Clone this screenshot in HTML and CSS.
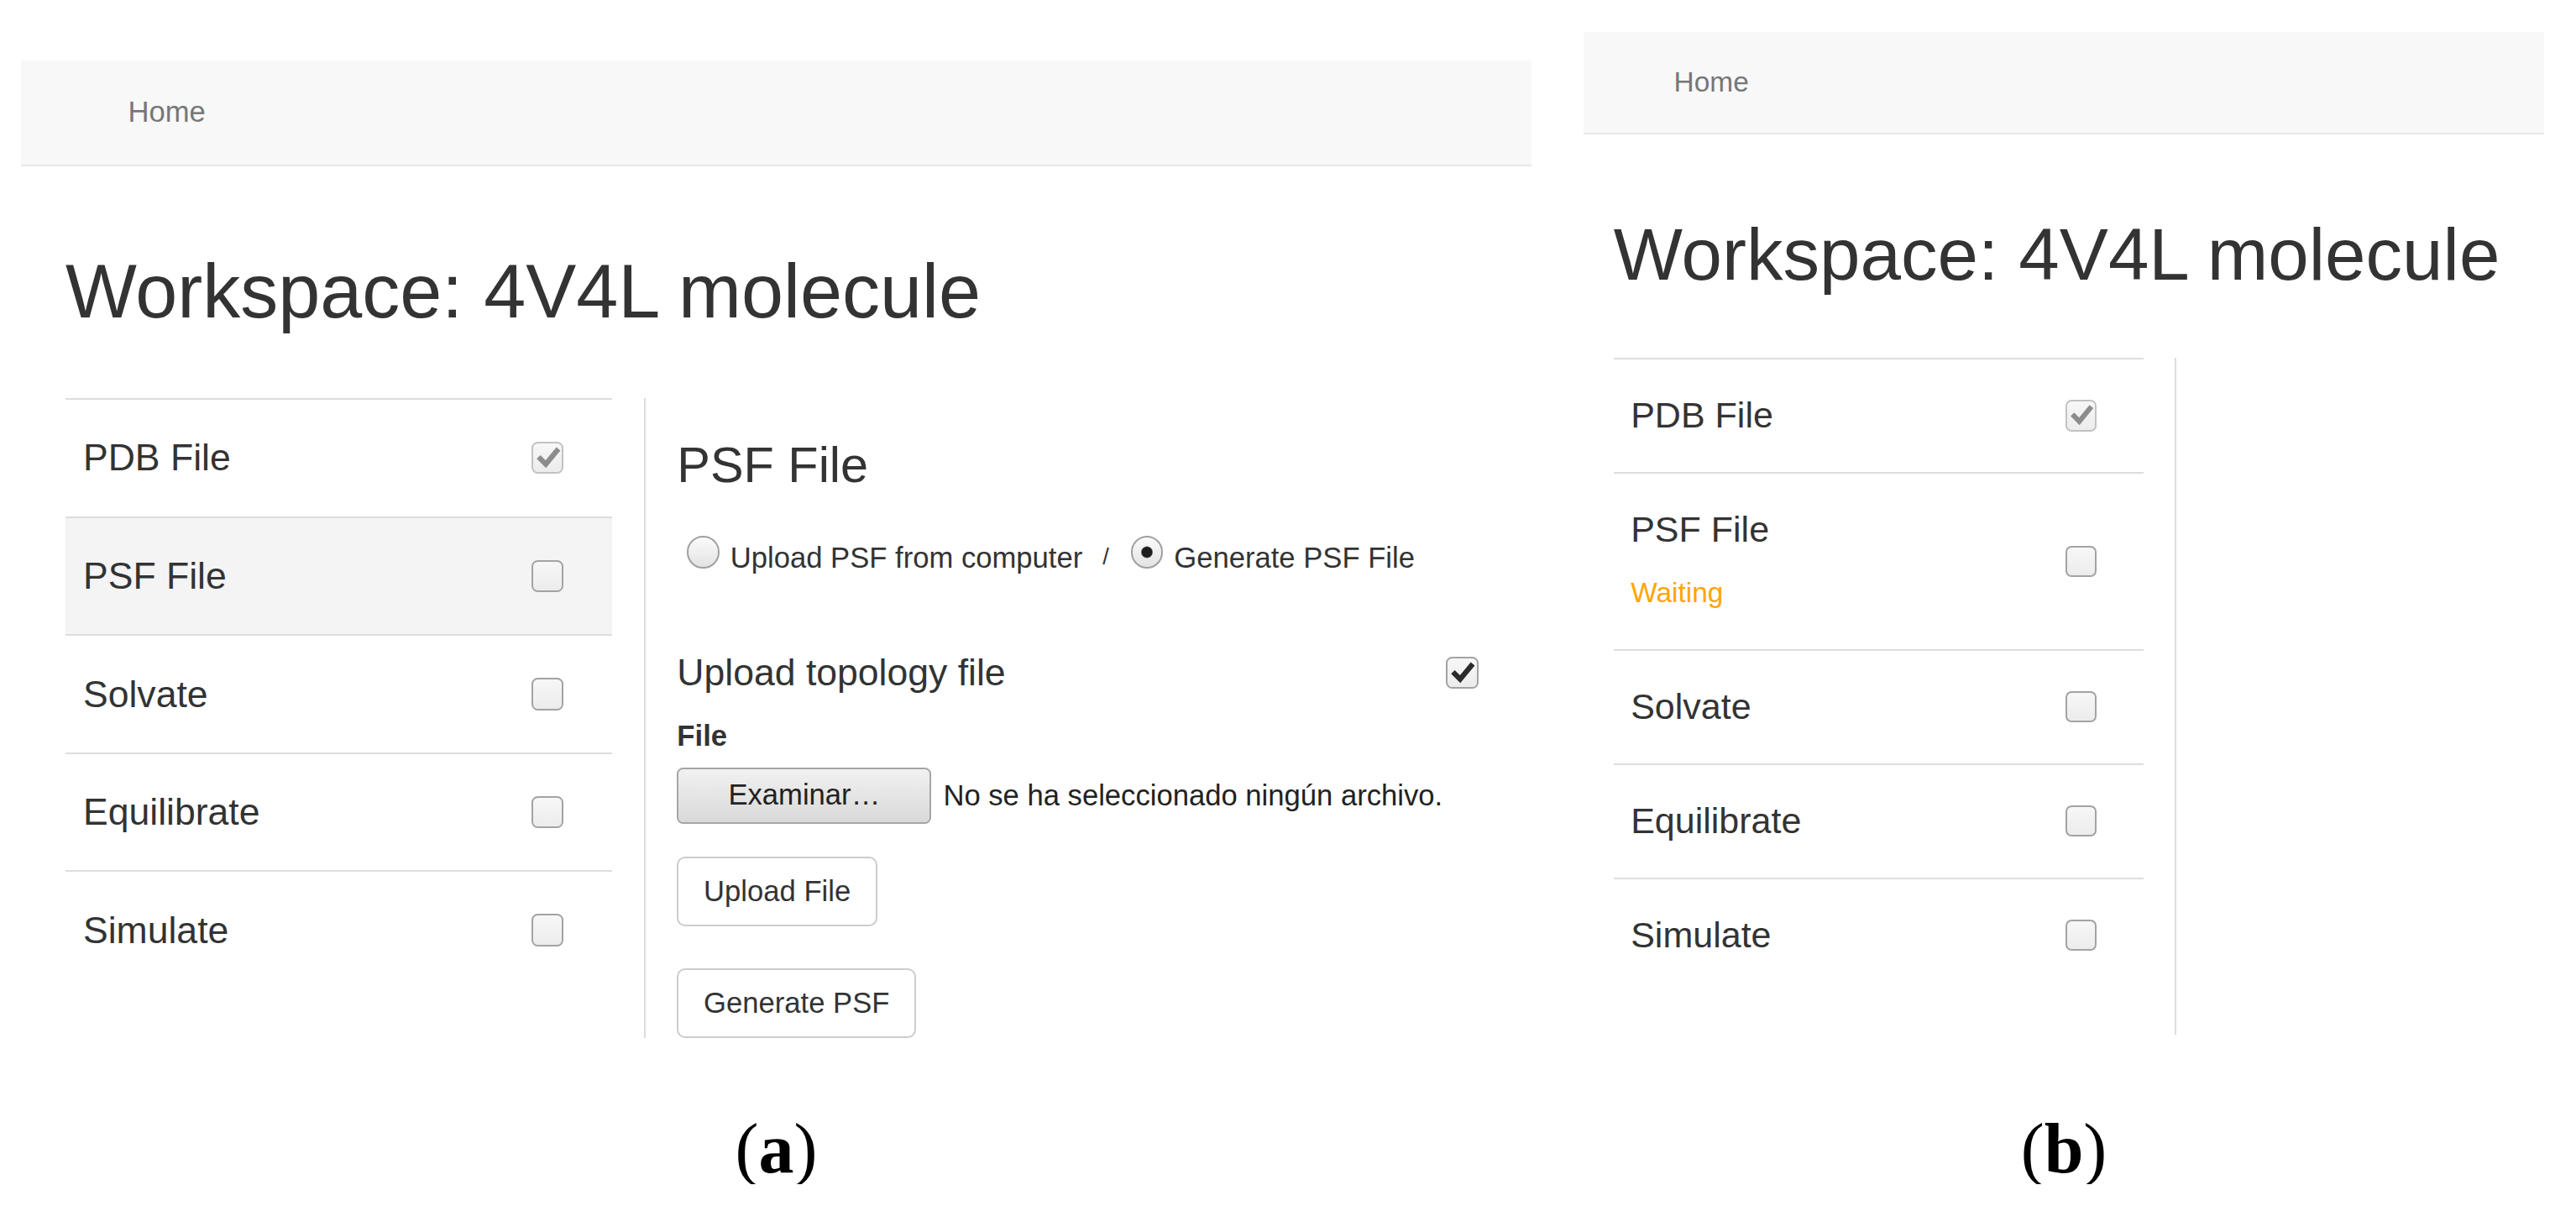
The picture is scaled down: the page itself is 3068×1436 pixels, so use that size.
FILE: index.html
```html
<!DOCTYPE html>
<html lang="en">
    <head>
        <title>Workspace: 4V4L molecule</title>
        <meta charset="utf-8">
        <meta name="viewport" content="width=device-width, initial-scale=1">
        <link rel="stylesheet" href="styles.css">
    </head>
    <body>

        <div class="figure">

            <!-- (a) PSF step open -->
            <div class="fig fig-a">
                <div class="panel panel-a">
                    <div class="navbar"><a class="nav-link" href="#">Home</a></div>
                    <div class="workspace">
                        <h1>Workspace: 4V4L molecule</h1>
                        <div class="steps">
                            <ul class="step-list">
                                <li class="step">
                                    <span class="step-title">PDB File</span>
                                    <span class="check is-checked is-disabled"><svg viewBox="0 0 16 16"><polyline points="3,7.5 7,11.5 14,3"/></svg></span>
                                </li>
                                <li class="step active">
                                    <span class="step-title">PSF File</span>
                                    <span class="check"></span>
                                </li>
                                <li class="step">
                                    <span class="step-title">Solvate</span>
                                    <span class="check"></span>
                                </li>
                                <li class="step">
                                    <span class="step-title">Equilibrate</span>
                                    <span class="check"></span>
                                </li>
                                <li class="step">
                                    <span class="step-title">Simulate</span>
                                    <span class="check"></span>
                                </li>
                            </ul>
                            <div class="step-pane">
                                <h3>PSF File</h3>
                                <div class="radio-row">
                                    <label class="radio-label"><span class="radio"></span>Upload PSF from computer</label>
                                    <span class="sep">/</span>
                                    <label class="radio-label"><span class="radio is-selected"></span>Generate PSF File</label>
                                </div>
                                <div class="pane-head">
                                    <h4>Upload topology file</h4>
                                    <span class="check is-checked"><svg viewBox="0 0 16 16"><polyline points="3,7.5 7,11.5 14,3"/></svg></span>
                                </div>
                                <label class="field-label">File</label>
                                <div class="file-input">
                                    <span class="file-btn">Examinar…</span>
                                    <span class="file-name">No se ha seleccionado ningún archivo.</span>
                                </div>
                                <button class="btn btn-upload" type="button">Upload File</button>
                                <button class="btn btn-generate" type="button">Generate PSF</button>
                            </div>
                        </div>
                    </div>
                </div>
            </div>

            <!-- (b) PSF step waiting -->
            <div class="fig fig-b">
                <div class="panel panel-b">
                    <div class="navbar"><a class="nav-link" href="#">Home</a></div>
                    <div class="workspace">
                        <h1>Workspace: 4V4L molecule</h1>
                        <div class="steps">
                            <ul class="step-list">
                                <li class="step">
                                    <span class="step-title">PDB File</span>
                                    <span class="check is-checked is-disabled"><svg viewBox="0 0 16 16"><polyline points="3,7.5 7,11.5 14,3"/></svg></span>
                                </li>
                                <li class="step">
                                    <span class="step-title">PSF File<span class="status">Waiting</span></span>
                                    <span class="check"></span>
                                </li>
                                <li class="step">
                                    <span class="step-title">Solvate</span>
                                    <span class="check"></span>
                                </li>
                                <li class="step">
                                    <span class="step-title">Equilibrate</span>
                                    <span class="check"></span>
                                </li>
                                <li class="step">
                                    <span class="step-title">Simulate</span>
                                    <span class="check"></span>
                                </li>
                            </ul>
                            <div class="step-pane step-pane-empty"></div>
                        </div>
                    </div>
                </div>
            </div>

            <div class="caption">(<b>a</b>)</div>
            <div class="caption">(<b>b</b>)</div>
        </div>

    </body>
</html>
```

FILE: styles.css
```css
* {
    box-sizing: border-box;
}
body {
    margin: 0;
    background-color: #fff;
    font-family: "Liberation Sans", Arial, Helvetica, sans-serif;
    color: #333;
}
/* Two screenshots side by side, captions underneath */
.figure {
    display: grid;
    grid-template-columns: 1799px 1144px;
    grid-template-rows: 1326px auto;
    column-gap: 62px;
    padding-left: 25px;
}
.fig-a {
    padding-top: 72px;
}
.fig-b {
    padding-top: 38px;
}
.caption {
    text-align: center;
    font-family: "Liberation Serif", "Times New Roman", serif;
    font-size: 84px;
    line-height: 84px;
    color: #000;
}
/* Each screenshot is the same page, scaled */
.panel {
    font-size: 14px;
    line-height: 20px;
}
.panel-a {
    zoom: 2.475;
}
.panel-b {
    zoom: 2.39;
}
/* Top navigation bar */
.navbar {
    height: 51px;
    background-color: #f8f8f8;
    border-bottom: 1px solid #e7e7e7;
}
.nav-link {
    display: inline-block;
    line-height: 50px;
    color: #777;
    text-decoration: none;
}
.panel-a .nav-link {
    padding-left: 51.5px;
}
.panel-b .nav-link {
    padding-left: 45px;
}
/* Content */
.workspace h1 {
    margin: 40.2px 0 31.6px;
    font-size: 36px;
    font-weight: normal;
    line-height: 39.6px;
}
.panel-a .workspace {
    padding-left: 21.4px;
}
.panel-a h1 {
    font-size: 36.35px;
}
.panel-b .workspace {
    padding-left: 15px;
}
.panel-b h1 {
    font-size: 36.45px;
}
.steps {
    display: flex;
}
.step-list {
    list-style-type: none;
    margin: 0;
    padding: 0;
    width: 263px;
    flex-shrink: 0;
}
.panel-b .step-list {
    width: 264px;
}
.step {
    display: flex;
    justify-content: space-between;
    align-items: center;
    padding: 18px 23.3px 18px 8.5px;
    border-top: 1px solid #ddd;
    font-size: 18px;
    line-height: 20px;
}
.step.active {
    background-color: #f4f4f4;
}
.step-title .status {
    display: block;
    margin-top: 11.5px;
    font-size: 14px;
    line-height: 20px;
    color: #ffa500;
}
/* Checkboxes */
.check {
    display: inline-block;
    flex-shrink: 0;
    width: 15.5px;
    height: 15.5px;
    border: 1px solid #a3a3a3;
    border-radius: 3px;
    background: linear-gradient(#f7f7f7, #ececec);
    color: #2b2b2b;
}
.check svg {
    display: block;
    width: 100%;
    height: 100%;
    overflow: visible;
}
.check polyline {
    fill: none;
    stroke: currentColor;
    stroke-width: 2.9;
}
.check.is-disabled {
    border-color: #c2c2c2;
    color: #8c8c8c;
}
/* Right hand pane */
.step-pane {
    flex: 1;
    margin-left: 15.5px;
    padding: 0 25.6px 0 15px;
    border-left: 1px solid #ddd;
}
.step-pane-empty {
    min-height: 337px;
}
.step-pane h3 {
    margin: 19px 0 21px;
    font-size: 24px;
    font-weight: normal;
    line-height: 1.1;
}
.radio-row {
    display: flex;
    align-items: baseline;
}
.radio-label {
    font-weight: normal;
}
.radio {
    display: inline-block;
    width: 15.5px;
    height: 15.5px;
    margin: 0 5.3px 0 4.8px;
    border: 1px solid #a0a0a0;
    border-radius: 50%;
    background: linear-gradient(#fbfbfb, #e3e3e3);
    vertical-align: baseline;
}
.radio.is-selected {
    margin-left: 0;
    background: radial-gradient(circle, #1e1e1e 0 2.4px, transparent 3px), linear-gradient(#fbfbfb, #e3e3e3);
}
.sep {
    margin: 0 10.5px 0 9.7px;
    font-size: 11px;
    position: relative;
    top: -2px;
}
.pane-head {
    display: flex;
    justify-content: space-between;
    align-items: center;
    margin: 34px 0 11px;
}
.pane-head h4 {
    margin: 0;
    font-size: 18px;
    font-weight: normal;
    line-height: 1.1;
}
.field-label {
    display: block;
    margin-bottom: 5px;
    font-weight: bold;
}
.file-input {
    display: flex;
    align-items: center;
}
.file-btn {
    display: inline-block;
    width: 122.4px;
    height: 27px;
    border: 1px solid #a6a6a6;
    border-radius: 3px;
    background: linear-gradient(#f1f1f1, #d9d9d9);
    line-height: 25px;
    text-align: center;
    color: #222;
}
.file-name {
    margin-left: 5.7px;
    color: #222;
}
.btn {
    display: block;
    padding: 6px 12px;
    border: 1px solid #ccc;
    border-radius: 4px;
    background-color: #fff;
    color: #333;
    font-family: inherit;
    font-size: 14px;
    line-height: 20px;
}
.btn-upload {
    margin-top: 15.6px;
}
.btn-generate {
    margin-top: 20.3px;
}
```
